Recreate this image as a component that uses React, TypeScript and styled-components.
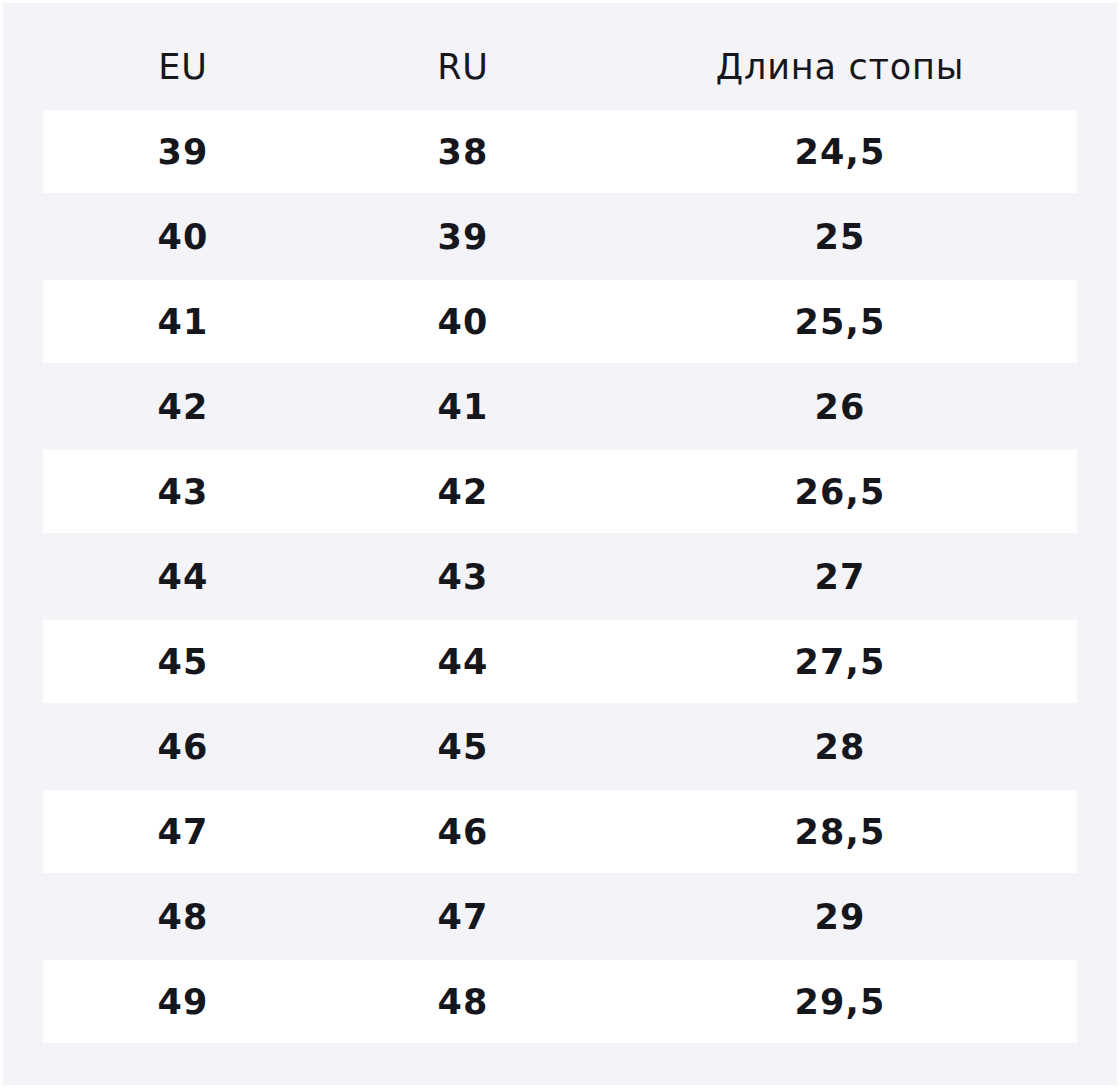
import React from 'react';
import styled, { createGlobalStyle } from 'styled-components';

const GlobalStyle = createGlobalStyle`
  html, body {
    margin: 0;
    padding: 0;
    background: #ffffff;
  }

  body {
    font-family: 'DejaVu Sans', 'Liberation Sans', sans-serif;
    color: #16161d;
  }
`;

const columns = '280px 280px 1fr';

const Panel = styled.div`
  box-sizing: border-box;
  width: 1114px;
  height: 1082px;
  margin: 3px;
  padding: 0 40px 41px;

  background: #f3f3f8;
`;

const HeaderRow = styled.div`
  display: grid;
  grid-template-columns: ${columns};
  box-sizing: border-box;
  height: 106px;
  padding-top: 43px;
`;

const HeadCell = styled.div`
  text-align: center;
  font-size: 35px;
  line-height: 42px;
  letter-spacing: 0.8px;
  font-weight: normal;
`;

type RowProps = {
  $striped?: boolean;
};

const Row = styled.div<RowProps>`
  display: grid;
  grid-template-columns: ${columns};
  align-items: center;
  box-sizing: border-box;
  height: 85px;

  border-top: 1px solid transparent;
  border-bottom: 1px solid transparent;
  background: ${({ $striped }) => ($striped ? '#ffffff' : 'transparent')};
  background-clip: padding-box;
`;

const Cell = styled.div`
  text-align: center;
  font-size: 35px;
  line-height: 42px;
  letter-spacing: 1.2px;
  font-weight: bold;
`;

const sizes: [string, string, string][] = [
  ['39', '38', '24,5'],
  ['40', '39', '25'],
  ['41', '40', '25,5'],
  ['42', '41', '26'],
  ['43', '42', '26,5'],
  ['44', '43', '27'],
  ['45', '44', '27,5'],
  ['46', '45', '28'],
  ['47', '46', '28,5'],
  ['48', '47', '29'],
  ['49', '48', '29,5'],
];

export default function App() {
  return (
    <>
      <GlobalStyle />
      <Panel>
        <HeaderRow>
          <HeadCell>EU</HeadCell>
          <HeadCell>RU</HeadCell>
          <HeadCell>Длина стопы</HeadCell>
        </HeaderRow>
        {sizes.map(([eu, ru, foot], i) => (
          <Row key={eu} $striped={i % 2 === 0}>
            <Cell>{eu}</Cell>
            <Cell>{ru}</Cell>
            <Cell>{foot}</Cell>
          </Row>
        ))}
      </Panel>
    </>
  );
}
